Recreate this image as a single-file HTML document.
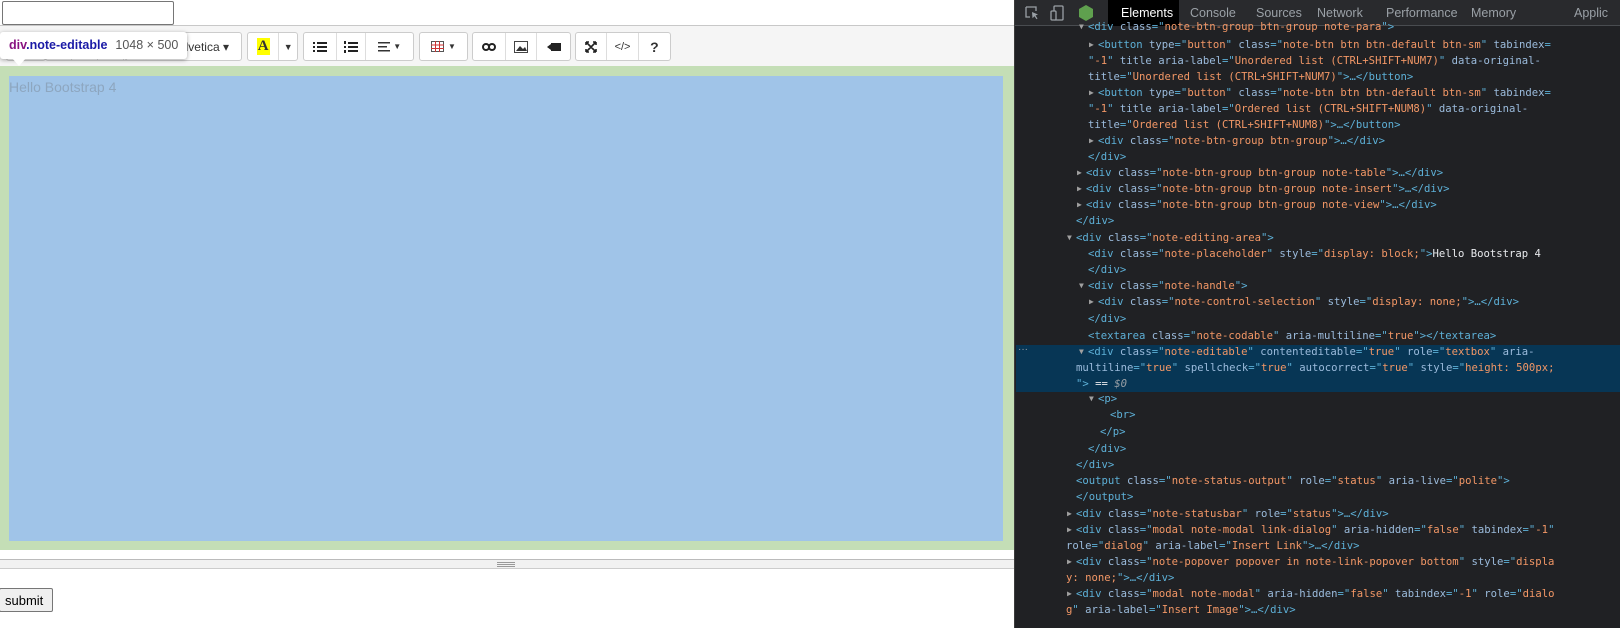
<!DOCTYPE html>
<html><head><meta charset="utf-8">
<style>
*{box-sizing:border-box;margin:0;padding:0}
body{width:1620px;height:628px;overflow:hidden;background:#fff;position:relative;font-family:"Liberation Sans",Arial,sans-serif}
#inp{position:absolute;left:2px;top:1px;width:172px;height:24px;border:1px solid #767676;border-radius:2px;background:#fff}
#ed{position:absolute;left:0;top:25px;width:1014px;height:544px;border-top:1px solid #c8c8c8}
#tb{position:absolute;left:0;top:26px;width:1014px;height:40px;background:#f5f5f5}
.g{position:absolute;top:32px;height:29px;border:1px solid #ccc;border-radius:3px;background:#fff;display:flex}
.g>div{border-right:1px solid #ddd;height:100%;display:flex;align-items:center;justify-content:center;font-size:12px;color:#333}
.g>div:last-child{border-right:none}
#green{position:absolute;left:0;top:66px;width:1014px;height:484px;background:#c4deb6}
#blue{position:absolute;left:9px;top:76px;width:994px;height:465px;background:#a0c4e8}
#ph{position:absolute;left:9px;top:79px;font-size:14px;color:#8da6bf}
#sb{position:absolute;left:0;top:559px;width:1014px;height:10px;background:#f1f1f1;border-top:1px solid #bbb;border-bottom:1px solid #ccc}
#sbw{position:absolute;left:0;top:550px;width:1014px;height:9px;background:#fff}
#submit{position:absolute;left:-1px;top:588px;width:54px;height:24px;border:1px solid #767676;border-radius:2px;background:#efefef;font-size:13px;padding:4px 0 0 5px;color:#000}
#tip{position:absolute;left:0;top:32px;width:187px;height:27px;background:#fff;border-radius:3px;box-shadow:0 1px 4px rgba(0,0,0,.35);font-size:12.5px;padding:6px 0 0 9px;white-space:nowrap}
#tip b{color:#881280;font-weight:bold}#tip b span{color:#1a1aa6}
#tip i{font-style:normal;color:#555;margin-left:8px}
#arrow{position:absolute;left:12px;top:58px;width:0;height:0;border-left:7px solid transparent;border-right:7px solid transparent;border-top:8px solid #fff}
#dt{position:absolute;left:1014px;top:0;width:606px;height:628px;background:#202124;border-left:1px solid #3c3c3c}
#tabs{position:absolute;left:0;top:0;width:606px;height:26px;background:#292a2d;border-bottom:1px solid #494c50;font-size:12.5px;color:#9aa0a6}
#tabs span{position:absolute;top:6px}
.ln{position:absolute;white-space:pre;font-family:"DejaVu Sans Mono","Liberation Mono",monospace;font-size:10.6px;line-height:16px;color:#e8eaed}
.t{color:#5db0d7}.a{color:#9bbbdc}.v{color:#f29766}
.tr{position:absolute;left:-9px;top:0;color:#a0a0a0;font-size:8px}
#hl{position:absolute;left:1px;top:345px;width:605px;height:47px;background:#073655}
</style></head><body>
<div id="inp"></div>
<div id="ed"></div>
<div id="tb"></div>
<div class="g" style="left:6px;width:40px"><div style="width:40px"></div></div>
<div class="g" style="left:45px;width:130px"><div style="width:26px"></div><div style="width:26px"></div><div style="width:26px"></div><div style="width:26px"></div></div>
<div class="g" style="left:125px;width:117px"><div style="width:117px;justify-content:flex-end;padding-right:12px">Helvetica ▾</div></div>
<div class="g" style="left:247px;width:51px"><div style="width:32px"><span style="background:#ff0;font-family:'Liberation Serif',serif;font-weight:bold;font-size:15px;padding:0 1px">A</span></div><div style="width:18px;font-size:9px">▼</div></div>
<div class="g" style="left:303px;width:111px"><div style="width:33px"><svg width="14" height="12"><g fill="#222"><rect x="0" y="1" width="2" height="2"/><rect x="0" y="5" width="2" height="2"/><rect x="0" y="9" width="2" height="2"/><rect x="4" y="1" width="10" height="2"/><rect x="4" y="5" width="10" height="2"/><rect x="4" y="9" width="10" height="2"/></g></svg></div><div style="width:30px"><svg width="14" height="12"><g fill="#222"><rect x="0" y="0" width="2" height="3"/><rect x="0" y="5" width="2" height="2"/><rect x="0" y="9" width="2" height="3"/><rect x="4" y="1" width="10" height="2"/><rect x="4" y="5" width="10" height="2"/><rect x="4" y="9" width="10" height="2"/></g></svg></div><div style="width:47px"><svg width="12" height="10"><g fill="#333"><rect y="0" width="12" height="1.5"/><rect y="4" width="9" height="1.5"/><rect y="8" width="12" height="1.5"/></g></svg><span style="font-size:8px;margin-left:3px">▼</span></div></div>
<div class="g" style="left:419px;width:49px"><div style="width:49px"><svg width="13" height="11"><g stroke="#555" fill="none"><rect x=".5" y=".5" width="12" height="10"/><path d="M4.5 0v11M8.5 0v11M0 4h13M0 7.5h13" stroke="#c33"/></g></svg><span style="font-size:8px;margin-left:4px">▼</span></div></div>
<div class="g" style="left:472px;width:99px"><div style="width:33px"><svg width="14" height="8"><g stroke="#222" stroke-width="2" fill="none"><rect x="1" y="1" width="6" height="6" rx="3"/><rect x="7" y="1" width="6" height="6" rx="3"/></g></svg></div><div style="width:32px"><svg width="14" height="12"><rect x=".5" y=".5" width="13" height="11" fill="#fff" stroke="#444"/><path d="M2 10l4-5 3 3 2-2 2 4z" fill="#333"/></svg></div><div style="width:33px"><svg width="14" height="10"><rect x="4" y="1" width="10" height="8" fill="#222"/><path d="M0 5l4-3v6z" fill="#222"/></svg></div></div>
<div class="g" style="left:575px;width:96px"><div style="width:32px"><svg width="12" height="12"><g stroke="#222" stroke-width="1.6" fill="none"><path d="M1 1l10 10M11 1L1 11M1 1h3M1 1v3M11 1h-3M11 1v3M1 11h3M1 11v-3M11 11h-3M11 11v-3"/></g></svg></div><div style="width:32px;font-size:11px">&lt;/&gt;</div><div style="width:32px;font-weight:bold;font-size:14px">?</div></div>
<div id="green"></div><div id="blue"></div>
<div id="ph">Hello Bootstrap 4</div>
<div id="sbw"></div>
<div id="sb"><div style="position:absolute;left:497px;top:2px;width:18px;height:5px;border-top:1px solid #999;border-bottom:1px solid #999"></div><div style="position:absolute;left:497px;top:4px;width:18px;height:1px;background:#999"></div></div>
<div id="submit">submit</div>
<div id="tip"><b>div<span>.note-editable</span></b><i>1048 × 500</i></div>
<div id="arrow"></div>

<div id="dt">
<div id="tabs">
<svg style="position:absolute;left:10px;top:6px" width="14" height="14"><path d="M1 1h10v4M1 1v10h4" stroke="#9aa0a6" fill="none" stroke-width="1.3"/><path d="M7 6l6 2.5-2.5 1 2 3-1 .7-2-3-2 2z" fill="#9aa0a6"/></svg>
<svg style="position:absolute;left:35px;top:5px" width="14" height="16"><rect x="4" y="1" width="9" height="14" rx="1" stroke="#9aa0a6" fill="none" stroke-width="1.3"/><rect x="1" y="6" width="5" height="9" rx="1" stroke="#9aa0a6" fill="#292a2d" stroke-width="1.3"/></svg>
<svg style="position:absolute;left:63px;top:4px" width="16" height="18"><path d="M8 1l7 4v8l-7 4-7-4V5z" fill="#5fa04e"/></svg>
<div style="position:absolute;left:94px;top:4px;width:1px;height:18px;background:#494c50"></div>
<div style="position:absolute;left:93px;top:0;width:71px;height:26px;background:#000"></div>
<span style="left:106px;color:#fff">Elements</span>
<span style="left:175px">Console</span>
<span style="left:241px">Sources</span>
<span style="left:302px">Network</span>
<span style="left:371px">Performance</span>
<span style="left:456px">Memory</span>
<span style="left:559px">Applic</span>
</div>
<div id="hl"></div>
<div style="position:absolute;left:3px;top:344px;color:#9aa0a6;font-size:10px">···</div>
</div>

<div class="ln" style="left:1088px;top:19px"><span class="tr">▼</span><span class="t">&lt;div </span><span class="a">class</span><span class="t">="</span><span class="v">note-btn-group btn-group note-para</span><span class="t">"&gt;</span></div>
<div class="ln" style="left:1098px;top:37px"><span class="tr">▶</span><span class="t">&lt;button </span><span class="a">type</span><span class="t">="</span><span class="v">button</span><span class="t">" </span><span class="a">class</span><span class="t">="</span><span class="v">note-btn btn btn-default btn-sm</span><span class="t">" </span><span class="a">tabindex</span><span class="t">=</span></div>
<div class="ln" style="left:1088px;top:53px"><span class="t">"</span><span class="v">-1</span><span class="t">" </span><span class="a">title aria-label</span><span class="t">="</span><span class="v">Unordered list (CTRL+SHIFT+NUM7)</span><span class="t">" </span><span class="a">data-original-</span></div>
<div class="ln" style="left:1088px;top:69px"><span class="a">title</span><span class="t">="</span><span class="v">Unordered list (CTRL+SHIFT+NUM7)</span><span class="t">"&gt;…&lt;/button&gt;</span></div>
<div class="ln" style="left:1098px;top:85px"><span class="tr">▶</span><span class="t">&lt;button </span><span class="a">type</span><span class="t">="</span><span class="v">button</span><span class="t">" </span><span class="a">class</span><span class="t">="</span><span class="v">note-btn btn btn-default btn-sm</span><span class="t">" </span><span class="a">tabindex</span><span class="t">=</span></div>
<div class="ln" style="left:1088px;top:101px"><span class="t">"</span><span class="v">-1</span><span class="t">" </span><span class="a">title aria-label</span><span class="t">="</span><span class="v">Ordered list (CTRL+SHIFT+NUM8)</span><span class="t">" </span><span class="a">data-original-</span></div>
<div class="ln" style="left:1088px;top:117px"><span class="a">title</span><span class="t">="</span><span class="v">Ordered list (CTRL+SHIFT+NUM8)</span><span class="t">"&gt;…&lt;/button&gt;</span></div>
<div class="ln" style="left:1098px;top:133px"><span class="tr">▶</span><span class="t">&lt;div </span><span class="a">class</span><span class="t">="</span><span class="v">note-btn-group btn-group</span><span class="t">"&gt;…&lt;/div&gt;</span></div>
<div class="ln" style="left:1088px;top:149px"><span class="t">&lt;/div&gt;</span></div>
<div class="ln" style="left:1086px;top:165px"><span class="tr">▶</span><span class="t">&lt;div </span><span class="a">class</span><span class="t">="</span><span class="v">note-btn-group btn-group note-table</span><span class="t">"&gt;…&lt;/div&gt;</span></div>
<div class="ln" style="left:1086px;top:181px"><span class="tr">▶</span><span class="t">&lt;div </span><span class="a">class</span><span class="t">="</span><span class="v">note-btn-group btn-group note-insert</span><span class="t">"&gt;…&lt;/div&gt;</span></div>
<div class="ln" style="left:1086px;top:197px"><span class="tr">▶</span><span class="t">&lt;div </span><span class="a">class</span><span class="t">="</span><span class="v">note-btn-group btn-group note-view</span><span class="t">"&gt;…&lt;/div&gt;</span></div>
<div class="ln" style="left:1076px;top:213px"><span class="t">&lt;/div&gt;</span></div>
<div class="ln" style="left:1076px;top:230px"><span class="tr">▼</span><span class="t">&lt;div </span><span class="a">class</span><span class="t">="</span><span class="v">note-editing-area</span><span class="t">"&gt;</span></div>
<div class="ln" style="left:1088px;top:246px"><span class="t">&lt;div </span><span class="a">class</span><span class="t">="</span><span class="v">note-placeholder</span><span class="t">" </span><span class="a">style</span><span class="t">="</span><span class="v">display: block;</span><span class="t">"&gt;</span>Hello Bootstrap 4</div>
<div class="ln" style="left:1088px;top:262px"><span class="t">&lt;/div&gt;</span></div>
<div class="ln" style="left:1088px;top:278px"><span class="tr">▼</span><span class="t">&lt;div </span><span class="a">class</span><span class="t">="</span><span class="v">note-handle</span><span class="t">"&gt;</span></div>
<div class="ln" style="left:1098px;top:294px"><span class="tr">▶</span><span class="t">&lt;div </span><span class="a">class</span><span class="t">="</span><span class="v">note-control-selection</span><span class="t">" </span><span class="a">style</span><span class="t">="</span><span class="v">display: none;</span><span class="t">"&gt;…&lt;/div&gt;</span></div>
<div class="ln" style="left:1088px;top:311px"><span class="t">&lt;/div&gt;</span></div>
<div class="ln" style="left:1088px;top:328px"><span class="t">&lt;textarea </span><span class="a">class</span><span class="t">="</span><span class="v">note-codable</span><span class="t">" </span><span class="a">aria-multiline</span><span class="t">="</span><span class="v">true</span><span class="t">"&gt;&lt;/textarea&gt;</span></div>
<div class="ln" style="left:1088px;top:344px"><span class="tr">▼</span><span class="t">&lt;div </span><span class="a">class</span><span class="t">="</span><span class="v">note-editable</span><span class="t">" </span><span class="a">contenteditable</span><span class="t">="</span><span class="v">true</span><span class="t">" </span><span class="a">role</span><span class="t">="</span><span class="v">textbox</span><span class="t">" </span><span class="a">aria-</span></div>
<div class="ln" style="left:1076px;top:360px"><span class="a">multiline</span><span class="t">="</span><span class="v">true</span><span class="t">" </span><span class="a">spellcheck</span><span class="t">="</span><span class="v">true</span><span class="t">" </span><span class="a">autocorrect</span><span class="t">="</span><span class="v">true</span><span class="t">" </span><span class="a">style</span><span class="t">="</span><span class="v">height: 500px;</span></div>
<div class="ln" style="left:1076px;top:376px"><span class="t">"&gt;</span> == <i style="color:#9aa0a6">$0</i></div>
<div class="ln" style="left:1098px;top:391px"><span class="tr">▼</span><span class="t">&lt;p&gt;</span></div>
<div class="ln" style="left:1110px;top:407px"><span class="t">&lt;br&gt;</span></div>
<div class="ln" style="left:1100px;top:424px"><span class="t">&lt;/p&gt;</span></div>
<div class="ln" style="left:1088px;top:441px"><span class="t">&lt;/div&gt;</span></div>
<div class="ln" style="left:1076px;top:457px"><span class="t">&lt;/div&gt;</span></div>
<div class="ln" style="left:1076px;top:473px"><span class="t">&lt;output </span><span class="a">class</span><span class="t">="</span><span class="v">note-status-output</span><span class="t">" </span><span class="a">role</span><span class="t">="</span><span class="v">status</span><span class="t">" </span><span class="a">aria-live</span><span class="t">="</span><span class="v">polite</span><span class="t">"&gt;</span></div>
<div class="ln" style="left:1076px;top:489px"><span class="t">&lt;/output&gt;</span></div>
<div class="ln" style="left:1076px;top:506px"><span class="tr">▶</span><span class="t">&lt;div </span><span class="a">class</span><span class="t">="</span><span class="v">note-statusbar</span><span class="t">" </span><span class="a">role</span><span class="t">="</span><span class="v">status</span><span class="t">"&gt;…&lt;/div&gt;</span></div>
<div class="ln" style="left:1076px;top:522px"><span class="tr">▶</span><span class="t">&lt;div </span><span class="a">class</span><span class="t">="</span><span class="v">modal note-modal link-dialog</span><span class="t">" </span><span class="a">aria-hidden</span><span class="t">="</span><span class="v">false</span><span class="t">" </span><span class="a">tabindex</span><span class="t">="</span><span class="v">-1</span><span class="t">"</span></div>
<div class="ln" style="left:1066px;top:538px"><span class="a">role</span><span class="t">="</span><span class="v">dialog</span><span class="t">" </span><span class="a">aria-label</span><span class="t">="</span><span class="v">Insert Link</span><span class="t">"&gt;…&lt;/div&gt;</span></div>
<div class="ln" style="left:1076px;top:554px"><span class="tr">▶</span><span class="t">&lt;div </span><span class="a">class</span><span class="t">="</span><span class="v">note-popover popover in note-link-popover bottom</span><span class="t">" </span><span class="a">style</span><span class="t">="</span><span class="v">displa</span></div>
<div class="ln" style="left:1066px;top:570px"><span class="v">y: none;</span><span class="t">"&gt;…&lt;/div&gt;</span></div>
<div class="ln" style="left:1076px;top:586px"><span class="tr">▶</span><span class="t">&lt;div </span><span class="a">class</span><span class="t">="</span><span class="v">modal note-modal</span><span class="t">" </span><span class="a">aria-hidden</span><span class="t">="</span><span class="v">false</span><span class="t">" </span><span class="a">tabindex</span><span class="t">="</span><span class="v">-1</span><span class="t">" </span><span class="a">role</span><span class="t">="</span><span class="v">dialo</span></div>
<div class="ln" style="left:1066px;top:602px"><span class="v">g</span><span class="t">" </span><span class="a">aria-label</span><span class="t">="</span><span class="v">Insert Image</span><span class="t">"&gt;…&lt;/div&gt;</span></div>
</body></html>
